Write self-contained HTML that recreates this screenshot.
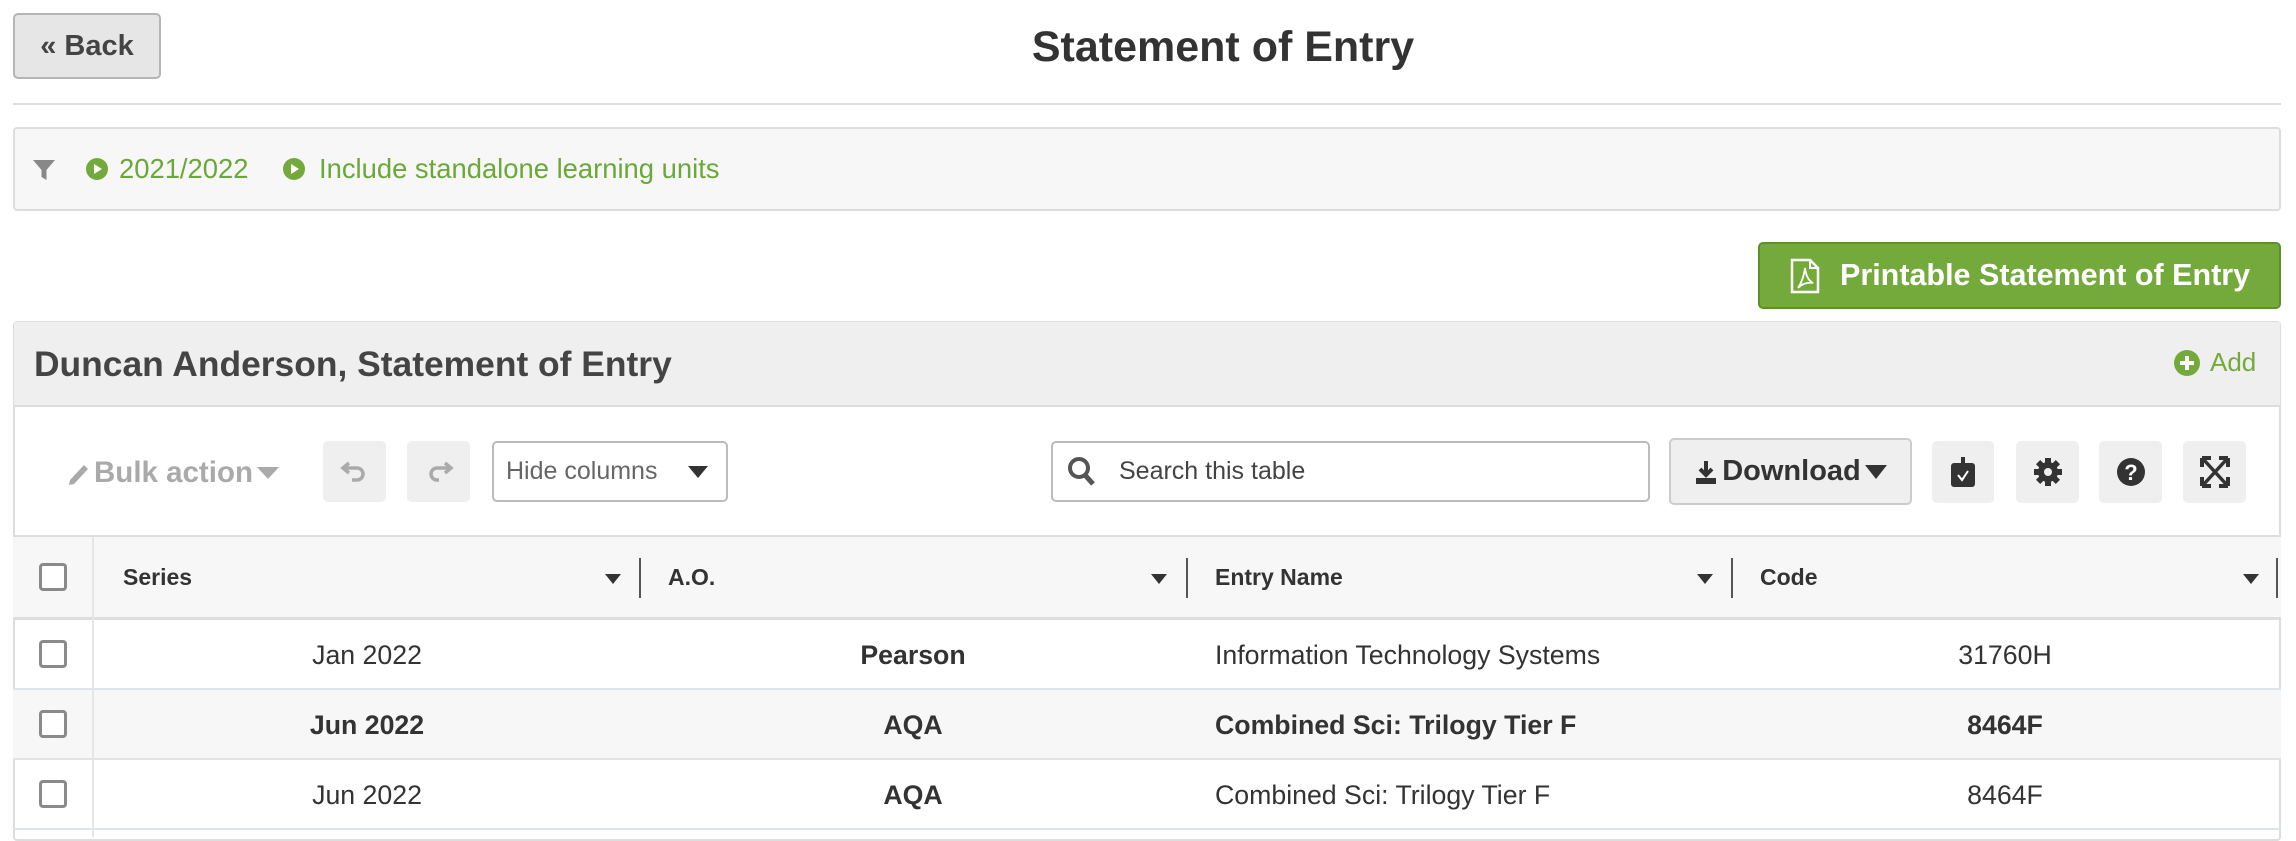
<!DOCTYPE html>
<html><head><meta charset="utf-8"><style>
*{box-sizing:border-box;margin:0;padding:0}
body{width:2296px;height:832px;overflow:hidden;background:#fff;font-family:"Liberation Sans",sans-serif;color:#333;position:relative}
.abs{position:absolute}
.btn{position:absolute;border-radius:5px;display:flex;align-items:center;justify-content:center}
.cb{position:absolute;width:28px;height:28px;border:3px solid #8a8a8a;border-radius:4px;background:#fff;left:39px}
.row{position:absolute;left:13px;width:2268px;border-bottom:2px solid #dfe3ea}
.cell{position:absolute;top:0;height:100%;display:flex;align-items:center;font-size:26.7px;color:#333}
.hd{position:absolute;font-size:23px;font-weight:bold;color:#333}
.sep{position:absolute;width:2px;background:#555;top:558px;height:40px}
.tri{position:absolute;width:0;height:0;border-left:8px solid transparent;border-right:8px solid transparent;border-top:10px solid #333}
</style></head><body>

<div class="btn" style="left:13px;top:13px;width:148px;height:66px;background:#e6e6e6;border:2px solid #b5b5b5;font-weight:bold;font-size:29px;color:#444">« Back</div>
<div class="abs" style="left:0;width:2446px;top:23px;text-align:center;font-size:43px;font-weight:bold;color:#333">Statement of Entry</div>
<div class="abs" style="left:13px;top:103px;width:2268px;height:2px;background:#ddd"></div>

<div class="abs" style="left:13px;top:127px;width:2268px;height:84px;background:#f7f7f7;border:2px solid #ddd;border-radius:4px"></div>
<svg class="abs" style="left:32px;top:158px" width="24" height="24" viewBox="0 0 24 24"><path d="M1 2h22l-8.5 10v10l-5-3v-7z" fill="#888"/></svg>
<svg class="abs" style="left:85px;top:157px" width="24" height="24" viewBox="0 0 24 24"><circle cx="12" cy="12" r="11" fill="#74aa3c"/><path d="M9 7l8 5-8 5z" fill="#fff"/></svg>
<div class="abs" style="left:119px;top:153px;font-size:27.4px;color:#6aa83a">2021/2022</div>
<svg class="abs" style="left:282px;top:157px" width="24" height="24" viewBox="0 0 24 24"><circle cx="12" cy="12" r="11" fill="#74aa3c"/><path d="M9 7l8 5-8 5z" fill="#fff"/></svg>
<div class="abs" style="left:319px;top:153px;font-size:27.4px;color:#6aa83a">Include standalone learning units</div>

<div class="btn" style="left:1758px;top:242px;width:523px;height:67px;background:#74aa3c;border:2px solid #5e8f2e;color:#fff;font-weight:bold;font-size:30.5px;justify-content:flex-start;padding-left:30px">
<svg width="30" height="36" viewBox="0 0 30 36" style="margin-right:20px"><path d="M2 2h18l8 8v24H2z" fill="none" stroke="#fff" stroke-width="2.5"/><path d="M20 2v8h8" fill="none" stroke="#fff" stroke-width="2"/><path d="M8 30c4-6 6-12 7-20 1 8 4 13 8 15-6-1-11 1-15 5z" fill="none" stroke="#fff" stroke-width="1.8"/></svg>Printable Statement of Entry</div>

<div class="abs" style="left:13px;top:321px;width:2268px;height:520px;border:2px solid #ddd;border-radius:4px"></div>
<div class="abs" style="left:14px;top:322px;width:2266px;height:85px;background:#efefef;border-bottom:2px solid #ddd"></div>
<div class="abs" style="left:34px;top:344px;font-size:35.4px;font-weight:bold;color:#444">Duncan Anderson, Statement of Entry</div>
<svg class="abs" style="left:2173px;top:349px" width="28" height="28" viewBox="0 0 28 28"><circle cx="14" cy="14" r="13" fill="#74aa3c"/><path d="M14 7v14M7 14h14" stroke="#fff" stroke-width="4"/></svg>
<div class="abs" style="left:2210px;top:347px;font-size:26px;color:#74aa3c">Add</div>

<div class="abs" style="left:66px;top:456px;font-size:29.5px;font-weight:bold;color:#aaa;display:flex;align-items:center"><svg width="24" height="26" viewBox="0 0 24 26" style="margin-right:4px"><path d="M4 20l14-15 4 4-14 15-5 1z" fill="#aaa"/></svg>Bulk action<span style="display:inline-block;margin-left:4px;border-left:11px solid transparent;border-right:11px solid transparent;border-top:12px solid #aaa"></span></div>
<div class="btn" style="left:323px;top:441px;width:63px;height:61px;background:#efefef"><svg width="30" height="30" viewBox="0 0 30 30"><path d="M9 6L3 11l6 5M3 11h14a6 6 0 010 12h-5" fill="none" stroke="#aaa" stroke-width="3.5"/></svg></div>
<div class="btn" style="left:407px;top:441px;width:63px;height:61px;background:#efefef"><svg width="30" height="30" viewBox="0 0 30 30"><path d="M21 6l6 5-6 5M27 11H13a6 6 0 000 12h2" fill="none" stroke="#aaa" stroke-width="3.5"/></svg></div>
<div class="btn" style="left:492px;top:441px;width:236px;height:61px;border:2px solid #bbb;background:#fff;justify-content:space-between;padding:0 18px 0 12px;font-size:25px;color:#666">Hide columns<span style="border-left:10px solid transparent;border-right:10px solid transparent;border-top:12px solid #333"></span></div>

<div class="btn" style="left:1051px;top:441px;width:599px;height:61px;border:2px solid #bbb;background:#fff;justify-content:flex-start;padding-left:14px;font-size:25px;color:#444"><svg width="30" height="32" viewBox="0 0 30 32" style="margin-right:22px"><circle cx="12" cy="12" r="9" fill="none" stroke="#555" stroke-width="4"/><path d="M18 19l8 9" stroke="#555" stroke-width="5"/></svg>Search this table</div>
<div class="btn" style="left:1669px;top:438px;width:243px;height:67px;background:#efefef;border:2px solid #ccc;font-size:29px;font-weight:bold;color:#333"><svg width="24" height="28" viewBox="0 0 24 28" style="margin-right:4px"><path d="M12 3v14M6 11l6 6 6-6" stroke="#333" stroke-width="4" fill="none"/><rect x="2" y="20" width="20" height="6" fill="#333"/></svg>Download<span style="margin-left:4px;border-left:11px solid transparent;border-right:11px solid transparent;border-top:14px solid #333"></span></div>
<div class="btn" style="left:1932px;top:441px;width:62px;height:62px;background:#efefef"><svg width="28" height="34" viewBox="0 0 28 34"><rect x="2" y="8" width="24" height="24" rx="3" fill="#333"/><path d="M14 2v8" stroke="#333" stroke-width="4"/><path d="M9 20l4 5 6-9" stroke="#fff" stroke-width="2" fill="none"/></svg></div>
<div class="btn" style="left:2016px;top:441px;width:63px;height:62px;background:#efefef"><svg width="30" height="30" viewBox="0 0 30 30"><g fill="#333"><circle cx="15" cy="15" r="10"/><rect x="12" y="1" width="6" height="28"/><rect x="1" y="12" width="28" height="6"/><rect x="12" y="1" width="6" height="28" transform="rotate(45 15 15)"/><rect x="12" y="1" width="6" height="28" transform="rotate(-45 15 15)"/></g><circle cx="15" cy="15" r="4" fill="#efefef"/></svg></div>
<div class="btn" style="left:2099px;top:441px;width:63px;height:62px;background:#efefef"><svg width="30" height="30" viewBox="0 0 30 30"><circle cx="15" cy="15" r="14" fill="#333"/><text x="15" y="23" text-anchor="middle" font-family="Liberation Sans" font-weight="bold" font-size="22" fill="#fff">?</text></svg></div>
<div class="btn" style="left:2183px;top:441px;width:63px;height:62px;background:#efefef"><svg width="30" height="32" viewBox="0 0 30 32"><path d="M4 4l22 24M26 4L4 28" stroke="#333" stroke-width="3.5"/><path d="M2 2h9M2 2v9M28 2h-9M28 2v9M2 30h9M2 30v-9M28 30h-9M28 30v-9" stroke="#333" stroke-width="4"/></svg></div>

<div class="abs" style="left:14px;top:535px;width:2266px;height:2px;background:#ddd"></div>
<div class="row" style="top:537px;height:83px;background:#f7f7f7;border-bottom:3px solid #ddd"></div>
<div class="abs" style="left:92px;top:537px;width:2px;height:300px;background:#e6e6e6"></div>
<div class="cb" style="top:563px"></div>
<div class="hd" style="left:123px;top:564px">Series</div><div class="tri" style="left:605px;top:574px"></div><div class="sep" style="left:639px"></div>
<div class="hd" style="left:668px;top:564px">A.O.</div><div class="tri" style="left:1151px;top:574px"></div><div class="sep" style="left:1186px"></div>
<div class="hd" style="left:1215px;top:564px">Entry Name</div><div class="tri" style="left:1697px;top:574px"></div><div class="sep" style="left:1731px"></div>
<div class="hd" style="left:1760px;top:564px">Code</div><div class="tri" style="left:2243px;top:574px"></div><div class="sep" style="left:2276px"></div>

<div class="row" style="top:620px;height:70px"></div>
<div class="row" style="top:690px;height:70px;background:#f7f7f7"></div>
<div class="row" style="top:760px;height:70px"></div>
<div class="abs" style="left:92px;top:620px;width:2px;height:212px;background:#e6e6e6"></div>

<div class="cb" style="top:640px"></div><div class="cb" style="top:710px"></div><div class="cb" style="top:780px"></div>

<div class="abs" style="top:620px;left:0;width:2296px;height:70px">
<div class="cell" style="left:94px;width:546px;justify-content:center">Jan 2022</div>
<div class="cell" style="left:640px;width:546px;justify-content:center;font-weight:bold">Pearson</div>
<div class="cell" style="left:1215px">Information Technology Systems</div>
<div class="cell" style="left:1732px;width:546px;justify-content:center">31760H</div></div>
<div class="abs" style="top:690px;left:0;width:2296px;height:70px">
<div class="cell" style="left:94px;width:546px;justify-content:center;font-weight:bold">Jun 2022</div>
<div class="cell" style="left:640px;width:546px;justify-content:center;font-weight:bold">AQA</div>
<div class="cell" style="left:1215px;font-weight:bold">Combined Sci: Trilogy Tier F</div>
<div class="cell" style="left:1732px;width:546px;justify-content:center;font-weight:bold">8464F</div></div>
<div class="abs" style="top:760px;left:0;width:2296px;height:70px">
<div class="cell" style="left:94px;width:546px;justify-content:center">Jun 2022</div>
<div class="cell" style="left:640px;width:546px;justify-content:center;font-weight:bold">AQA</div>
<div class="cell" style="left:1215px">Combined Sci: Trilogy Tier F</div>
<div class="cell" style="left:1732px;width:546px;justify-content:center">8464F</div></div>
</body></html>
